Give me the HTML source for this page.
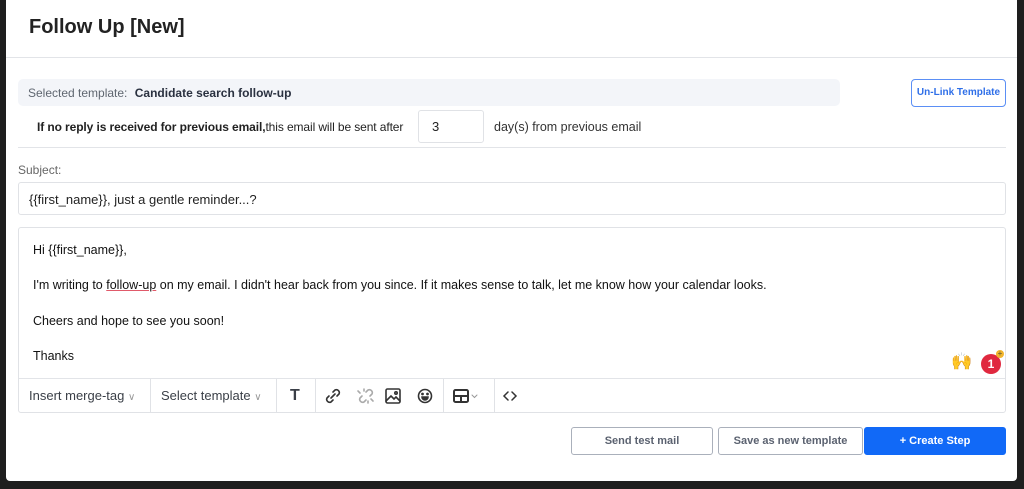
<!DOCTYPE html>
<html><head><meta charset="utf-8"><style>
*{box-sizing:border-box;margin:0;padding:0}
body{width:1024px;height:489px;background:#1e1e1e;position:relative;overflow:hidden;font-family:"Liberation Sans",Arial,sans-serif}
.panel{position:absolute;left:6px;top:0;width:1011px;height:481px;background:#fff;border-radius:0 0 4px 4px}
.abs{position:absolute}
h1{position:absolute;left:23px;top:16px;font-size:20px;font-weight:bold;color:#222}
.hr{position:absolute;height:1px;background:#e2e4e8}
.tb{left:12px;top:79px;width:822px;height:27px;background:#f3f5f9;border-radius:5px;font-size:12px;color:#5f6670;padding:7px 10px}
.tb b{color:#2a3140;margin-left:4px}
.btn{position:absolute;border:1px solid #aab0bb;border-radius:3px;font-size:11px;font-weight:bold;color:#5b6270;text-align:center;line-height:26px}
.ed{position:absolute;border:1px solid #e0e2e6;background:#fff}
.tool{position:absolute;top:379px;height:33px;font-size:13px;color:#3a3f47;line-height:33px}
.sep{position:absolute;top:379px;width:1px;height:33px;background:#e0e2e6}
</style></head><body>
<div class="panel">
<h1>Follow Up [New]</h1>
<div class="hr" style="left:0;top:57px;width:1011px"></div>
<div class="abs tb">Selected template: <b>Candidate search follow-up</b></div>
<div class="btn" style="left:905px;top:79px;width:95px;height:28px;border-color:#5b8ff5;color:#2f6fe8;border-radius:4px;font-size:10px">Un-Link Template</div>
<div class="abs" style="left:31px;top:120px;font-size:12px;color:#222;letter-spacing:-0.1px"><b>If no reply is received for previous email,</b>this email will be sent after</div>
<div class="abs" style="left:412px;top:110px;width:66px;height:33px;border:1px solid #e0e2e6;border-radius:3px;font-size:13px;padding:8px 13px;color:#222">3</div>
<div class="abs" style="left:488px;top:120px;font-size:12.5px;color:#333">day(s) from previous email</div>
<div class="hr" style="left:12px;top:147px;width:988px"></div>
<div class="abs" style="left:12px;top:163px;font-size:12px;color:#666">Subject:</div>
<div class="ed" style="left:12px;top:182px;width:988px;height:33px;border-radius:3px;font-size:13px;padding:9px 10px;color:#222">{{first_name}}, just a gentle reminder...?</div>
<div class="ed" style="left:12px;top:227px;width:988px;height:186px;border-radius:3px"></div>
<div class="hr" style="left:13px;top:378px;width:986px"></div>
<div class="abs" style="left:27px;top:233px;font-size:12.5px;color:#111;line-height:35.3px">Hi {{first_name}},<br>I'm writing to <span style="text-decoration:underline;text-decoration-color:#e05a6a">follow-up</span> on my email. I didn't hear back from you since. If it makes sense to talk, let me know how your calendar looks.<br>Cheers and hope to see you soon!<br>Thanks</div>
<div class="abs" style="left:945px;top:352px;font-size:17px">🙌</div>
<div class="abs" style="left:975px;top:354px;width:20px;height:20px;border-radius:50%;background:#e0283f;color:#fff;font-size:12px;font-weight:bold;text-align:center;line-height:20px">1</div>
<div class="abs" style="left:990px;top:350px;width:8px;height:8px;border-radius:50%;background:#f2b52c;font-size:8px;line-height:8px;text-align:center;color:#553">+</div>
<div class="tool" style="left:23px">Insert merge-tag <span style="color:#999;font-size:10px">&#8744;</span></div>
<div class="sep" style="left:144px"></div>
<div class="tool" style="left:155px">Select template <span style="color:#999;font-size:10px">&#8744;</span></div>
<div class="sep" style="left:270px"></div>
<div class="tool" style="left:284px;font-size:16px;font-weight:bold">T</div>
<div class="sep" style="left:309px"></div>
<svg class="abs" style="left:318px;top:387px" width="200" height="18" viewBox="0 0 200 18" fill="none" stroke="#333" stroke-width="1.6" stroke-linecap="round">
<path d="M7 11l4-4M5 9l-2 2a3 3 0 004 4l2-2M13 9l2-2a3 3 0 00-4-4l-2 2"/>
<g stroke="#aaa"><path d="M38 9l-2 2a3 3 0 004 4l2-2M46 9l2-2a3 3 0 00-4-4l-2 2M34 4l2 2M49 14l-2-2M40 2v2M44 16v-2"/></g>
<rect x="62" y="2" width="14" height="14" rx="1.5"/><path d="M62 14l5-5 3 3 2-2 4 4"/><circle cx="72" cy="6" r="1.2"/>
<circle cx="101" cy="9" r="6.5"/><path d="M98 10a3 3 0 006 0z" fill="#333"/><circle cx="98.5" cy="7" r=".6" fill="#333"/><circle cx="103.5" cy="7" r=".6" fill="#333"/>
<rect x="130" y="3" width="14" height="12" rx="1.5" stroke-width="2"/><path d="M130 9h14M137 9v6" stroke-width="2"/>
<path d="M148 8l2.5 2.5L153 8" stroke="#999" stroke-width="1"/>
<path d="M184 5l-4 4 4 4M188 5l4 4-4 4" stroke-width="1.5"/>
</svg>
<div class="sep" style="left:437px"></div>
<div class="sep" style="left:488px"></div>
<div class="btn" style="left:565px;top:427px;width:142px;height:28px">Send test mail</div>
<div class="btn" style="left:712px;top:427px;width:145px;height:28px">Save as new template</div>
<div class="btn" style="left:858px;top:427px;width:142px;height:28px;background:#1169f7;border-color:#1169f7;color:#fff">+ Create Step</div>
</div>
</body></html>
